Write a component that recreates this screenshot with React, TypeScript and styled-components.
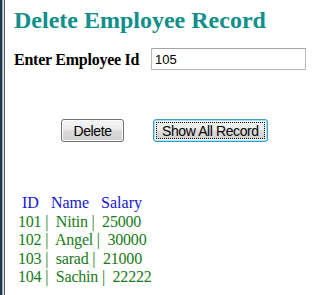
import React from "react";
import styled, { createGlobalStyle } from "styled-components";

const Global = createGlobalStyle`
  html, body { margin: 0; padding: 0; background: #fff; }
  body { font-family: "Liberation Serif", "Times New Roman", serif; }
`;

const Page = styled.div`
  display: flex;
  min-height: 295px;
`;

const Frame = styled.div`
  width: 5px;
  flex: none;
  background: linear-gradient(to right, #1d3a4f 0, #1d3a4f 2px, #9aa6b0 2px, #9aa6b0 3px, #e4e4e4 3px, #e4e4e4 4px, #5a5a5a 4px);
`;

const Content = styled.div`
  flex: 1;
  padding-left: 9px;
`;

const Title = styled.h2`
  margin: 6px 0 0;
  font-size: 24px;
  line-height: 28px;
  font-weight: bold;
  color: #0f8f8b;
`;

const FormRow = styled.div`
  display: flex;
  align-items: center;
  margin-top: 14px;
`;

const Label = styled.label`
  width: 137px;
  padding-top: 2px;
  font-size: 16px;
  letter-spacing: -0.25px;
  font-weight: bold;
  color: #000;
`;

const Input = styled.input`
  box-sizing: border-box;
  width: 155px;
  height: 22px;
  padding: 0 3px;
  border: 1px solid #b8b8b8;
  border-top-color: #a4a4a4;
  font-family: "Liberation Sans", Arial, sans-serif;
  font-size: 13px;
  color: #000;
  outline: none;
`;

const ButtonRow = styled.div`
  display: flex;
  align-items: center;
  margin-top: 49px;
  padding-left: 47px;
  gap: 29px;
`;

const Button = styled.button<{ $focused?: boolean }>`
  box-sizing: border-box;
  min-width: 63px;
  height: 23px;
  padding: 0 8px;
  font-family: "Liberation Sans", Arial, sans-serif;
  font-size: 14px;
  letter-spacing: -0.4px;
  color: #000;
  border-radius: 3px;
  border: 1px solid ${(p) => (p.$focused ? "#3c9fc8" : "#707070")};
  background: linear-gradient(to bottom, #f4f4f4 0%, #ececec 45%, #dcdcdc 50%, #cfcfcf 100%);
  box-shadow: ${(p) =>
    p.$focused
      ? "inset 0 0 0 1px #a8dcf0, inset 0 0 0 2px #fff"
      : "inset 0 0 0 1px #fbfbfb"};
  position: relative;
  cursor: default;
  &::after {
    content: "";
    display: ${(p) => (p.$focused ? "block" : "none")};
    position: absolute;
    inset: 2px;
    border: 1px dotted #000;
  }
`;

const Records = styled.div`
  margin-top: 52px;
  padding-left: 4px;
  font-size: 16px;
  line-height: 18.5px;
  white-space: pre;
`;

const HeaderLine = styled.div`
  color: #1515d6;
`;

const RecordLine = styled.div`
  color: #187a18;
  letter-spacing: -0.2px;
`;

const rows = [
  ["101", "Nitin", "25000"],
  ["102", "Angel", "30000"],
  ["103", "sarad", "21000"],
  ["104", "Sachin", "22222"],
];

export default function App() {
  return (
    <>
      <Global />
      <Page>
        <Frame />
        <Content>
          <Title>Delete Employee Record</Title>
          <FormRow>
            <Label>Enter Employee Id</Label>
            <Input defaultValue="105" />
          </FormRow>
          <ButtonRow>
            <Button>Delete</Button>
            <Button $focused>Show All Record</Button>
          </ButtonRow>
          <Records>
            <HeaderLine>{" ID   Name   Salary"}</HeaderLine>
            {rows.map((r) => (
              <RecordLine key={r[0]}>{`${r[0]} |  ${r[1]} |  ${r[2]}`}</RecordLine>
            ))}
          </Records>
        </Content>
      </Page>
    </>
  );
}
